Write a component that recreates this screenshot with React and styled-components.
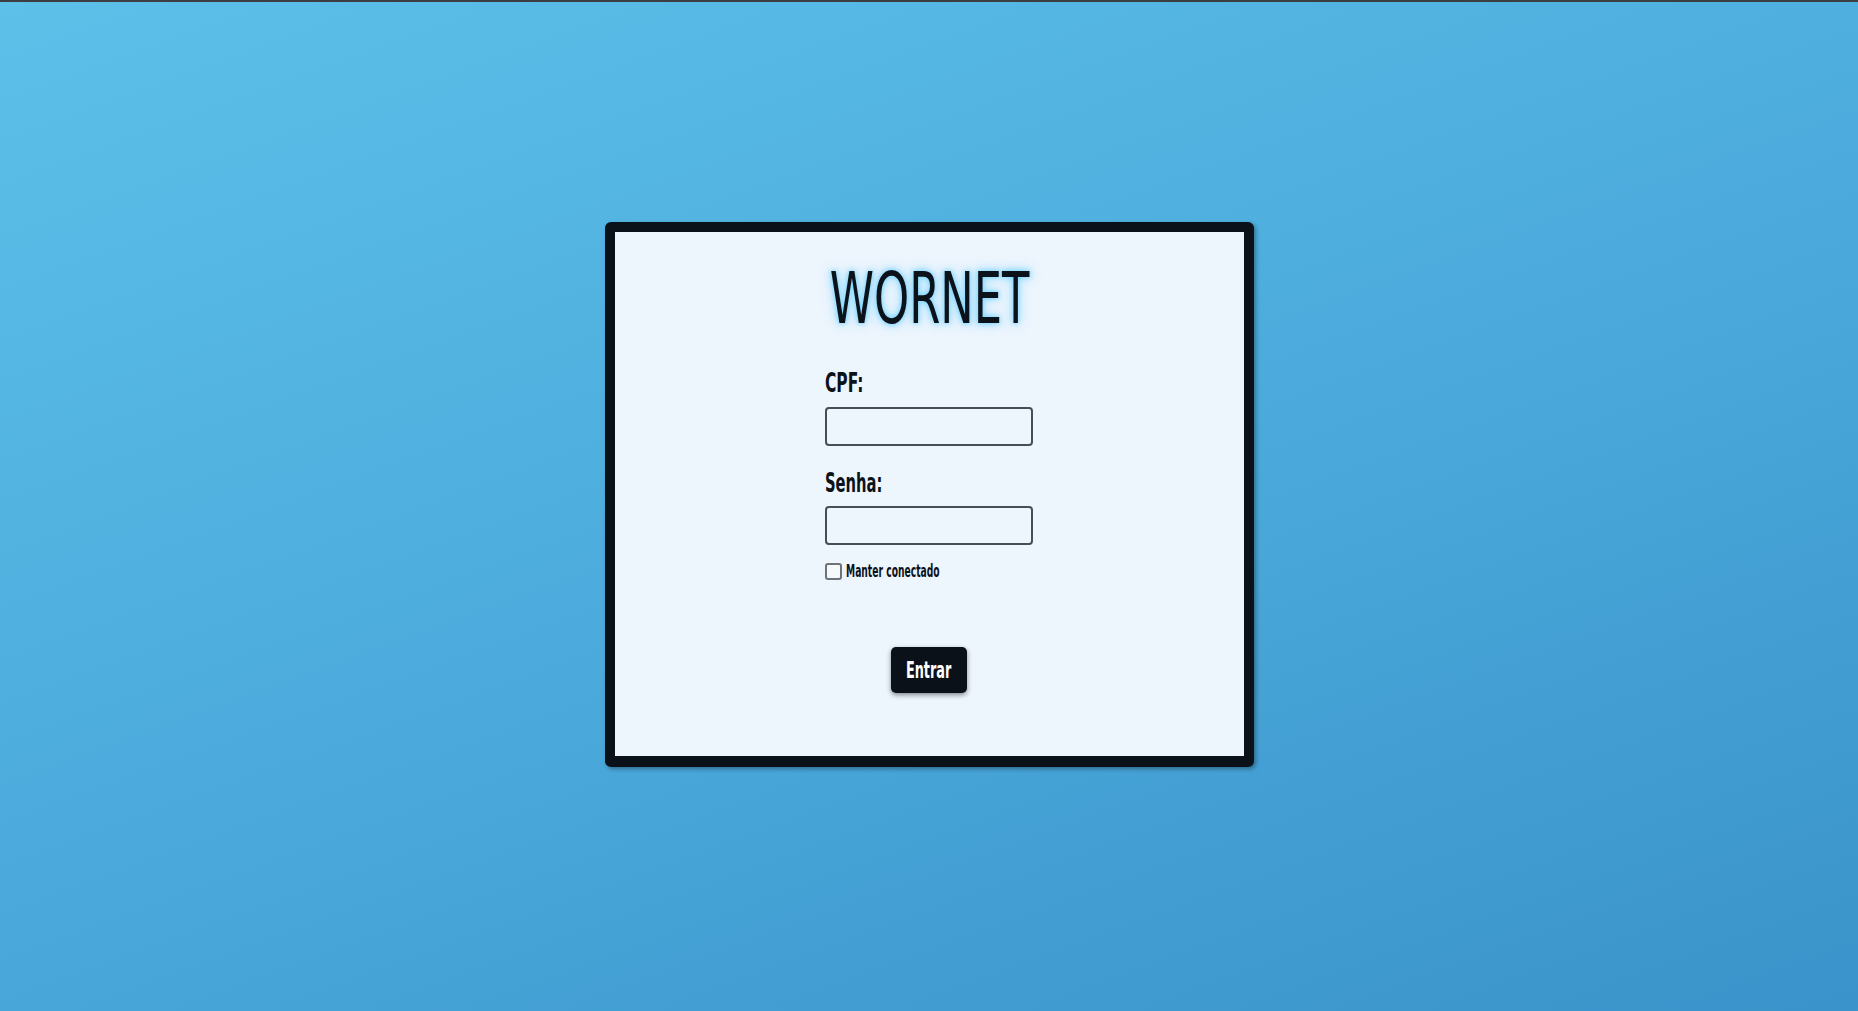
import React from "react"
import styled, { createGlobalStyle } from "styled-components"

const GlobalStyle = createGlobalStyle`
  * {
    box-sizing: border-box;
  }
  html, body {
    margin: 0;
    padding: 0;
  }
  body {
    font-family: "DejaVu Sans Condensed", "Liberation Sans Narrow", "Liberation Sans", sans-serif;
    color: #0b1219;
  }
`

const narrowFont = `"DejaVu Sans Condensed", "Liberation Sans Narrow", "Liberation Sans", sans-serif`

const Page = styled.div`
  min-height: 100vh;
  display: flex;
  flex-direction: column;
  background: linear-gradient(160deg, #5cc0e9 0%, #4cabdc 50%, #3a93ca 100%);
`

const TopLine = styled.div`
  height: 2px;
  background: #3c3f42;
`

const Stage = styled.main`
  flex: 1;
  display: flex;
  align-items: center;
  justify-content: center;
  padding-bottom: 25px;
`

const Card = styled.section`
  width: 649px;
  border: 10px solid #0a1118;
  border-bottom-width: 11px;
  border-radius: 6px;
  background: #edf5fd;
  box-shadow: 2px 2px 4px rgba(0, 0, 0, 0.35);
  padding: 32px 0 63px;
  display: flex;
  flex-direction: column;
  align-items: center;
`

const Narrow = styled.span`
  display: inline-block;
  white-space: nowrap;
  transform: scaleX(${p => p.$sx || 0.7});
  transform-origin: ${p => p.$origin || "left"} center;
`

const Title = styled.h1`
  margin: 0;
  font-family: ${narrowFont};
  font-weight: 400;
  font-size: 71px;
  line-height: 70px;
  height: 70px;
  color: #0b1219;
  text-shadow: 0 0 5px rgba(110, 210, 255, 0.95), 0 0 10px rgba(110, 210, 255, 0.7),
    0 0 16px rgba(110, 210, 255, 0.4);
`

const Form = styled.form`
  width: 208px;
  display: flex;
  flex-direction: column;
  align-items: stretch;
`

const Label = styled.label`
  display: block;
  font-family: ${narrowFont};
  font-weight: 700;
  font-size: 26px;
  line-height: 26px;
  height: 26px;
  margin-top: ${p => p.$top}px;
  margin-bottom: ${p => p.$bottom}px;
  color: #0b1219;
`

const Input = styled.input`
  display: block;
  width: 208px;
  height: 39px;
  margin: 0;
  border: 2px solid #484e54;
  border-radius: 4px;
  background: #edf5fd;
  font-size: 16px;
  padding: 0 8px;
  outline: none;
`

const CheckRow = styled.label`
  display: flex;
  align-items: center;
  gap: 4px;
  margin-top: 18px;
  height: 17px;
  font-family: ${narrowFont};
  font-weight: 700;
  font-size: 17px;
  color: #0b1219;
  cursor: pointer;
`

const Check = styled.input`
  appearance: none;
  margin: 0;
  width: 17px;
  height: 17px;
  flex: none;
  border: 2px solid #6e7378;
  border-radius: 3px;
  background: #f6f9fc;
`

const Button = styled.button`
  align-self: center;
  margin-top: 67px;
  width: 76px;
  height: 46px;
  padding: 0;
  border: none;
  border-radius: 5px;
  background: #0a1118;
  color: #ffffff;
  font-family: ${narrowFont};
  font-size: 23px;
  font-weight: 700;
  box-shadow: 0 2px 5px rgba(0, 0, 0, 0.45);
  cursor: pointer;
  display: flex;
  align-items: center;
  justify-content: center;
`

export default function App() {
  return (
    <>
      <GlobalStyle />
      <Page>
        <TopLine />
        <Stage>
          <Card>
            <Title>
              <Narrow $sx={0.7} $origin="center">WORNET</Narrow>
            </Title>
            <Form onSubmit={e => e.preventDefault()}>
              <Label htmlFor="cpf" $top={36} $bottom={11}>
                <Narrow $sx={0.66}>CPF:</Narrow>
              </Label>
              <Input id="cpf" type="text" />
              <Label htmlFor="senha" $top={24} $bottom={10}>
                <Narrow $sx={0.63}>Senha:</Narrow>
              </Label>
              <Input id="senha" type="password" />
              <CheckRow>
                <Check type="checkbox" />
                <Narrow $sx={0.6}>Manter conectado</Narrow>
              </CheckRow>
              <Button type="submit">
                <Narrow $sx={0.62} $origin="center">Entrar</Narrow>
              </Button>
            </Form>
          </Card>
        </Stage>
      </Page>
    </>
  )
}
